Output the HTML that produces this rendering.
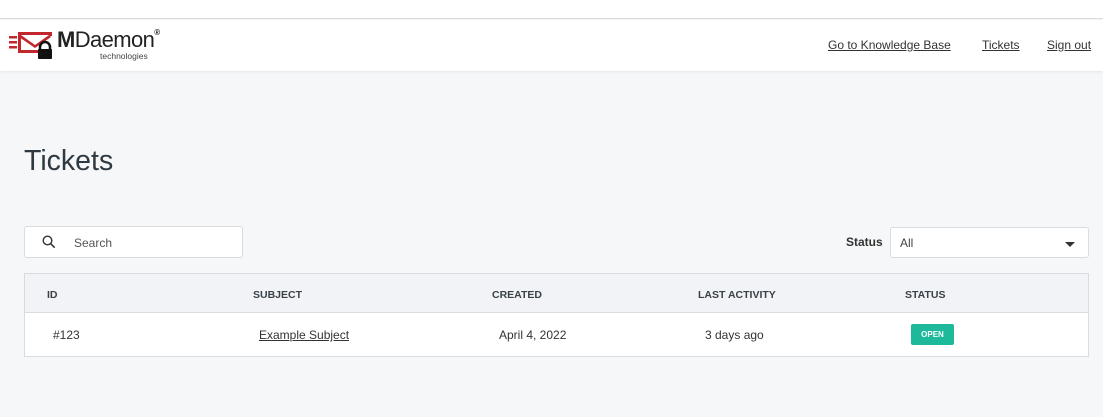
<!DOCTYPE html>
<html><head><style>
*{margin:0;padding:0;box-sizing:border-box}
body{width:1103px;height:417px;overflow:hidden;background:#f6f7f9;font-family:"Liberation Sans",Arial,sans-serif;color:#2f3941;position:relative}
.top{position:absolute;left:0;top:0;width:1103px;height:19px;background:#fff;border-bottom:1px solid #dcdcdc}
.hdr{position:absolute;left:0;top:20px;width:1103px;height:51px;background:#fff;box-shadow:0 1px 3px rgba(0,0,0,.08)}
.nav a{position:absolute;top:18px;font-size:12px;color:#333;text-decoration:underline}
h1{position:absolute;left:24px;top:145px;font-size:28.5px;font-weight:normal;color:#2f3941}
.search{position:absolute;left:24px;top:226px;width:219px;height:32px;background:#fff;border:1px solid #d8dcde;border-radius:3px}
.search span{position:absolute;left:49px;top:9px;font-size:12px;color:#555}
.st{position:absolute;left:846px;top:235px;font-size:12px;font-weight:bold;color:#333}
.sel{position:absolute;left:890px;top:227px;width:199px;height:31px;background:#fff;border:1px solid #d8dcde;border-radius:3px}
.sel span{position:absolute;left:9px;top:8px;font-size:12px;color:#444}
.sel i{position:absolute;right:13px;top:14px;border-left:5px solid transparent;border-right:5px solid transparent;border-top:5px solid #333}
.tbl{position:absolute;left:24px;top:273px;width:1065px;height:84px;background:#fff;border:1px solid #d8dcde}
.th{position:absolute;left:0;top:0;width:100%;height:39px;background:#f1f3f6;border-bottom:1px solid #d8dcde}
.th span{position:absolute;top:15px;font-size:10.5px;font-weight:bold;color:#3a4149}
.r span{position:absolute;top:54px;font-size:12px;color:#333}
.badge{position:absolute;left:886px;top:50px;width:43px;height:21px;background:#1eb99b;border-radius:2px;color:#fff;font-size:8px;font-weight:bold;text-align:center;line-height:21px}
</style></head><body>
<div class="top"></div>
<div class="hdr">
<svg style="position:absolute;left:7px;top:8px" width="55" height="32" viewBox="0 0 55 32">
<g fill="#c1272d"><rect x="2" y="8" width="8" height="2.5"/><rect x="2" y="13" width="8" height="2.5"/><rect x="2" y="18" width="8" height="2.5"/>
<path d="M11 4h34v4h-3v-1h-28v15h24v3h-27z"/><path d="M14 7l14 10l14-10l2 2l-16 11l-16-11z"/></g>
<path d="M33 27v-8a5 5 0 0 1 10 0v8" fill="none" stroke="#111" stroke-width="2.5"/><rect x="31" y="21" width="14" height="10" rx="1" fill="#111"/>
</svg>
<div style="position:absolute;left:57px;top:7px;font-size:22px;font-weight:bold;letter-spacing:-0.6px;color:#222">M<span style="font-weight:normal">Daemon</span><sup style="font-size:8px;vertical-align:12px">®</sup></div>
<div style="position:absolute;left:100px;top:31px;font-size:8.5px;color:#444">technologies</div>
<div class="nav"><a style="left:828px">Go to Knowledge Base</a><a style="left:982px">Tickets</a><a style="left:1047px">Sign out</a></div>
</div>
<h1>Tickets</h1>
<div class="search"><svg style="position:absolute;left:17px;top:8px" width="14" height="14" viewBox="0 0 14 14"><circle cx="5.5" cy="5.5" r="4.3" fill="none" stroke="#333" stroke-width="1.4"/><path d="M8.7 8.7l4 4" stroke="#333" stroke-width="1.5"/></svg><span>Search</span></div>
<div class="st">Status</div>
<div class="sel"><span>All</span><i></i></div>
<div class="tbl">
<div class="th"><span style="left:22px">ID</span><span style="left:228px">SUBJECT</span><span style="left:467px">CREATED</span><span style="left:673px">LAST ACTIVITY</span><span style="left:880px">STATUS</span></div>
<div class="r"><span style="left:28px">#123</span><span style="left:234px;text-decoration:underline">Example Subject</span><span style="left:474px">April 4, 2022</span><span style="left:680px">3 days ago</span></div>
<div class="badge">OPEN</div>
</div>
</body></html>
